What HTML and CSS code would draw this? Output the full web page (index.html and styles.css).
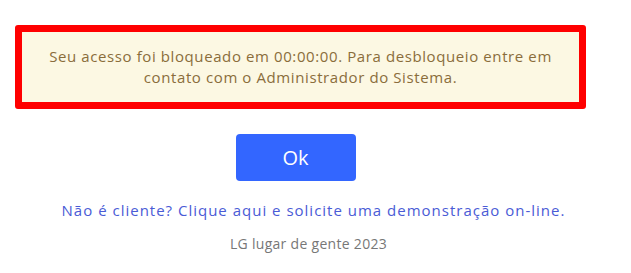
FILE: index.html
```html
<!DOCTYPE html>
<html lang="pt">
<head>
<meta charset="utf-8">
<link rel="stylesheet" href="styles.css">
</head>
<body>
<main class="page">
  <div class="alert-frame">
    <div class="alert">Seu acesso foi bloqueado em 00:00:00. Para desbloqueio entre em<br>contato com o Administrador do Sistema.</div>
  </div>
  <button class="btn-ok">Ok</button>
  <a class="demo-link" href="#">Não é cliente? Clique aqui e solicite uma demonstração on-line.</a>
  <p class="footer">LG lugar de gente 2023</p>
</main>
</body>
</html>
```
FILE: styles.css
```css
* { box-sizing: border-box; }
html, body { margin: 0; padding: 0; background: #fff; }
body {
  font-family: "Open Sans", "Liberation Sans", sans-serif;
  width: 631px;
  height: 273px;
  overflow: hidden;
}
.page {
  display: flex;
  flex-direction: column;
  align-items: center;
  width: 601px;
  padding-top: 25px;
}
.alert-frame {
  width: 571px;
  height: 84px;
  border: 7px solid #ff0000;
  border-radius: 3px;
  background: #fcf8e3;
  display: flex;
  align-items: center;
  justify-content: center;
}
.alert {
  color: #8a6d3b;
  font-size: 15px;
  letter-spacing: 0.6px;
  line-height: 21px;
  text-align: center;
  white-space: nowrap;
}
.btn-ok {
  margin-top: 25px;
  margin-right: 10px;
  width: 120px;
  height: 47px;
  background: #3366ff;
  color: #fff;
  border: none;
  border-radius: 4px;
  font-family: "Open Sans", "Liberation Sans", sans-serif;
  font-size: 20px;
}
.demo-link {
  margin-top: 20px;
  margin-left: 26px;
  color: #4a5bd6;
  font-size: 15px;
  letter-spacing: 1px;
  line-height: 18px;
  text-decoration: none;
  white-space: nowrap;
}
.footer {
  margin: 16px 0 0 16px;
  color: #777;
  font-size: 14px;
  letter-spacing: 0.3px;
  line-height: 18px;
}
```
